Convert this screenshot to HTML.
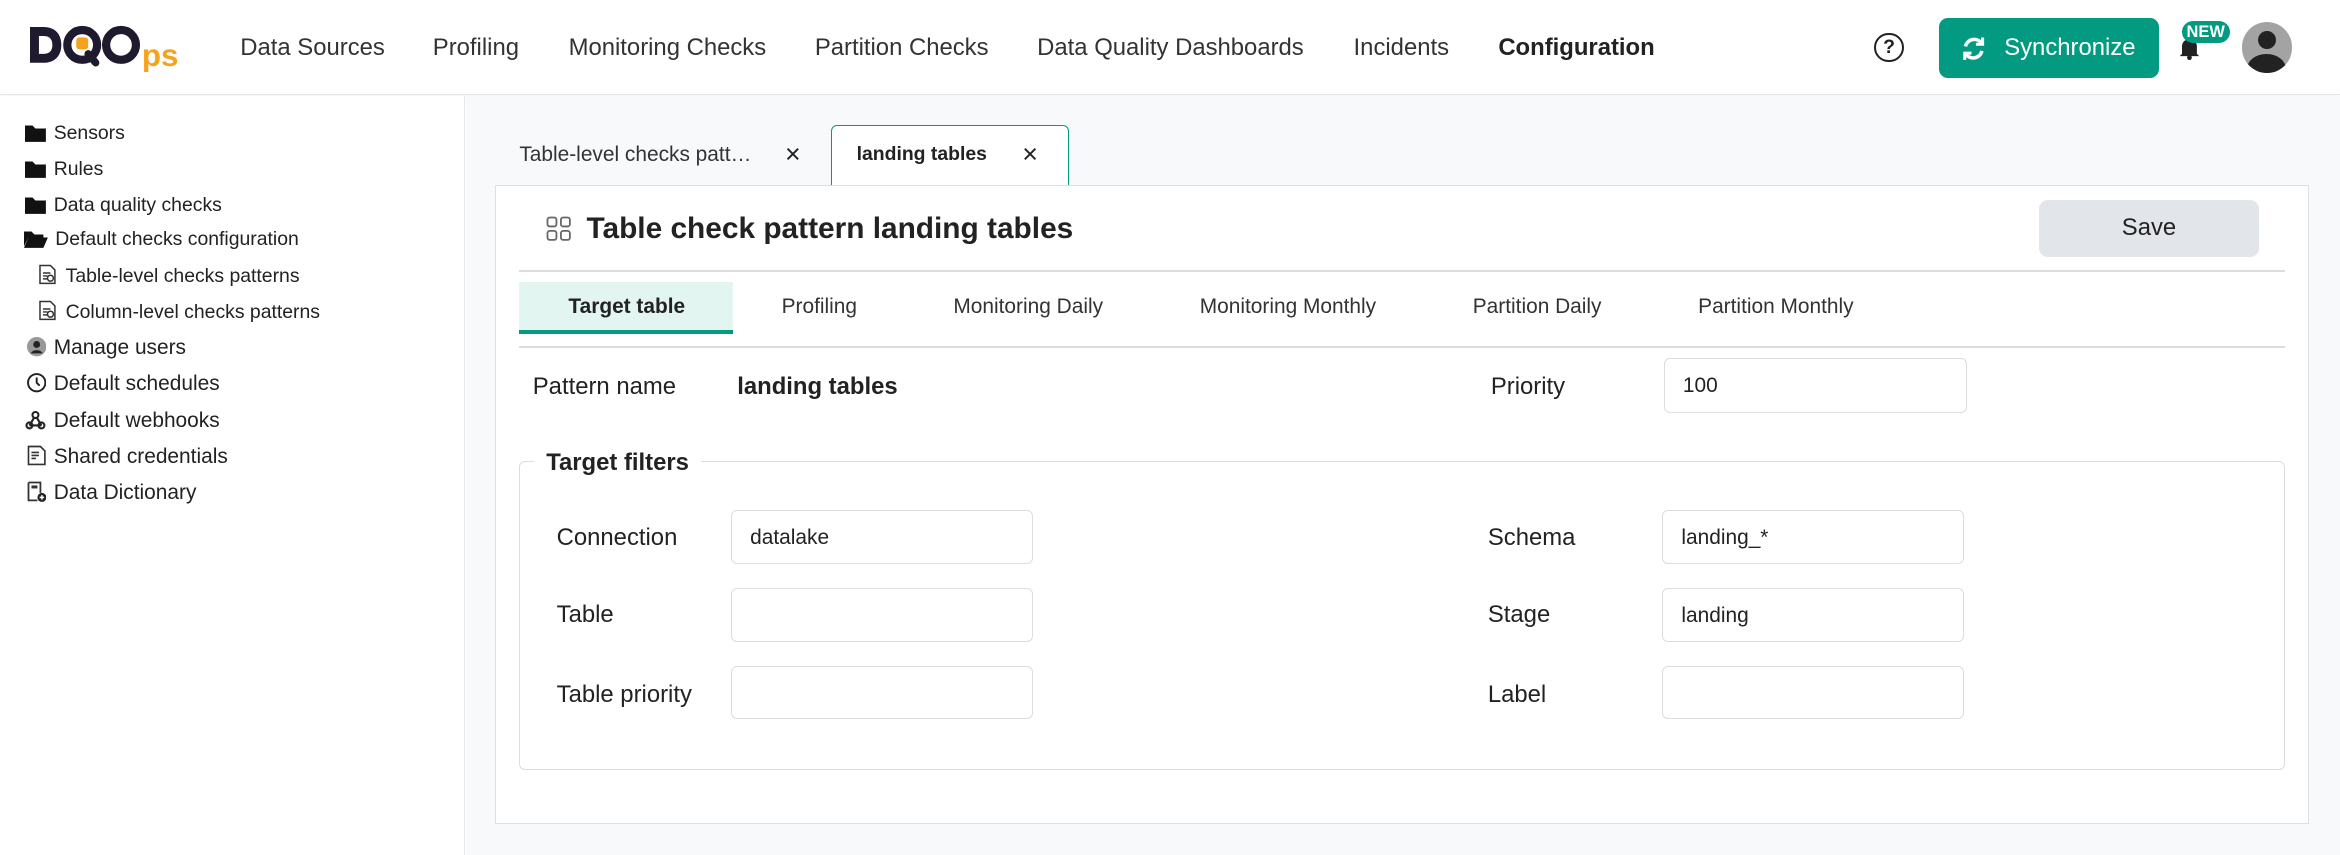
<!DOCTYPE html>
<html><head><meta charset="utf-8">
<style>
html,body{margin:0;padding:0;}
body{width:1568px;height:573px;zoom:1.49235;overflow:hidden;font-family:"Liberation Sans",Arial,sans-serif;color:#222;background:#fff;position:relative;}
.a{position:absolute;white-space:nowrap;}
.hdr{position:absolute;left:0;top:0;width:1568px;height:63px;background:#fff;border-bottom:1px solid #e3e5e8;box-shadow:0 1px 3px rgba(0,0,0,.06);}
.nav{font-size:16px;color:#333;top:23px;}
.side{position:absolute;left:0;top:64px;width:311px;height:509px;background:#fff;border-right:1px solid #e5e7ea;}
.main{position:absolute;left:312px;top:64px;width:1256px;height:509px;background:#f8f9fa;}
.si{font-size:14px;color:#222;}
.si svg{vertical-align:-2px;margin-right:5px;}
.inp{position:absolute;height:35px;width:202px;border:1px solid #ddd;border-radius:4px;background:#fff;box-sizing:border-box;font-size:14px;padding:10px 12px;color:#222;}
.lbl{font-size:16px;color:#222;}
.st{font-size:14px;color:#333;top:198px;transform:translateX(-50%);}
</style></head><body>
<div class="hdr"></div>
<!-- logo -->
<svg class="a" style="left:18px;top:16px;" width="120" height="32" viewBox="0 0 120 32">
<path d="M2 2h9c8 0 12 5 12 12s-4 12-12 12H2z M8 8v12h3c4 0 6-2 6-6s-2-6-6-6z" fill="#1f1a2e" fill-rule="evenodd"/>
<circle cx="37" cy="14" r="10" fill="none" stroke="#1f1a2e" stroke-width="5.5"/>
<line x1="41" y1="20" x2="46" y2="26" stroke="#1f1a2e" stroke-width="5" stroke-linecap="round"/>
<rect x="33" y="9" width="8" height="8" rx="2" fill="#f7a21b"/>
<circle cx="63" cy="14" r="10" fill="none" stroke="#1f1a2e" stroke-width="5.5"/>
<text x="77" y="28" font-family="Liberation Sans" font-weight="bold" font-size="21" fill="#f7a21b">ps</text>
</svg>
<div class="a nav" style="left:161px;">Data Sources</div>
<div class="a nav" style="left:290px;">Profiling</div>
<div class="a nav" style="left:381px;">Monitoring Checks</div>
<div class="a nav" style="left:546px;">Partition Checks</div>
<div class="a nav" style="left:695px;">Data Quality Dashboards</div>
<div class="a nav" style="left:907px;">Incidents</div>
<div class="a nav" style="left:1004px;font-weight:bold;color:#222;">Configuration</div>
<div class="a" style="left:1256px;top:22px;width:17px;height:17px;border:2px solid #222;border-radius:50%;font-size:13px;font-weight:bold;text-align:center;line-height:17px;">?</div>
<div class="a" style="left:1299px;top:12px;width:148px;height:40px;background:#029a80;border-radius:6px;color:#fff;font-size:16px;line-height:40px;">
<svg style="position:absolute;left:15px;top:12px;" width="17" height="17" viewBox="0 0 17 17" fill="none" stroke="#fff" stroke-width="2.4"><path d="M3 7a6 6 0 0 1 10.5-2.5"/><path d="M14 10a6 6 0 0 1-10.5 2.5"/><path d="M14.5 1v4.5h-4.5" stroke-width="2"/><path d="M2.5 16v-4.5h4.5" stroke-width="2"/></svg>
<span style="position:absolute;left:44px;">Synchronize</span></div>
<svg class="a" style="left:1460px;top:24px;" width="14" height="16" viewBox="0 0 14 16"><path d="M2 12V7a5 5 0 0 1 10 0v5l1.5 1.5h-13z" fill="#222"/><circle cx="7" cy="14.5" r="1.6" fill="#222"/></svg>
<div class="a" style="left:1462px;top:14px;width:32px;height:15px;background:#029a80;border-radius:8px;color:#fff;font-size:11px;font-weight:bold;text-align:center;line-height:15px;">NEW</div>
<div class="a" style="left:1502px;top:15px;width:34px;height:34px;border-radius:50%;background:#a3a3a3;overflow:hidden;"><div style="position:absolute;left:11px;top:6px;width:12px;height:12px;border-radius:50%;background:#222;"></div><div style="position:absolute;left:4px;top:21px;width:26px;height:20px;border-radius:50%;background:#222;"></div></div>

<div class="side"></div>
<div class="main"></div>
<!-- sidebar -->
<div class="a si" style="left:17px;top:82px;font-size:13px;"><svg width="14" height="12" viewBox="0 0 14 12"><path d="M0 1h5l2 2h7v9H0z" fill="#111"/></svg>Sensors</div>
<div class="a si" style="left:17px;top:106px;font-size:13px;"><svg width="14" height="12" viewBox="0 0 14 12"><path d="M0 1h5l2 2h7v9H0z" fill="#111"/></svg>Rules</div>
<div class="a si" style="left:17px;top:130px;font-size:13px;"><svg width="14" height="12" viewBox="0 0 14 12"><path d="M0 1h5l2 2h7v9H0z" fill="#111"/></svg>Data quality checks</div>
<div class="a si" style="left:16px;top:153px;font-size:13px;"><svg width="16" height="12" viewBox="0 0 16 12"><path d="M0 1h5l2 2h6v2H3L0 11z M3 5h13l-3 7H0z" fill="#111"/></svg>Default checks configuration</div>
<div class="a si" style="left:25px;top:177px;font-size:13px;"><svg width="14" height="14" viewBox="0 0 14 14" fill="none" stroke="#333" stroke-width="1"><path d="M2 1h7l3 3v9H2z"/><path d="M4 6h5M4 8h3M4 10h3"/><circle cx="9" cy="9.5" r="2"/></svg>Table-level checks patterns</div>
<div class="a si" style="left:25px;top:201px;font-size:13px;"><svg width="14" height="14" viewBox="0 0 14 14" fill="none" stroke="#333" stroke-width="1"><path d="M2 1h7l3 3v9H2z"/><path d="M4 6h5M4 8h3M4 10h3"/><circle cx="9" cy="9.5" r="2"/></svg>Column-level checks patterns</div>
<div class="a si" style="left:18px;top:225px;"><svg width="13" height="13" viewBox="0 0 13 13"><circle cx="6.5" cy="6.5" r="6.5" fill="#999"/><circle cx="6.5" cy="5" r="2.3" fill="#222"/><path d="M2.5 11a4.5 4 0 0 1 8 0z" fill="#222"/></svg>Manage users</div>
<div class="a si" style="left:18px;top:249px;"><svg width="13" height="13" viewBox="0 0 13 13" fill="none" stroke="#222" stroke-width="1.3"><circle cx="6.5" cy="6.5" r="5.8"/><path d="M6.5 3v3.5l2 2"/></svg>Default schedules</div>
<div class="a si" style="left:17px;top:274px;"><svg width="14" height="14" viewBox="0 0 14 14" fill="none" stroke="#222" stroke-width="1.4"><circle cx="7" cy="4" r="2"/><circle cx="3" cy="11" r="2"/><circle cx="11" cy="11" r="2"/><path d="M6 6l-3 5M8 6l3 5M3 11h8"/></svg>Default webhooks</div>
<div class="a si" style="left:18px;top:298px;"><svg width="13" height="14" viewBox="0 0 13 14" fill="none" stroke="#333" stroke-width="1.1"><path d="M1 1h8l3 3v9H1z"/><path d="M3 5h5M3 7h5M3 9h3"/></svg>Shared credentials</div>
<div class="a si" style="left:18px;top:322px;"><svg width="13" height="14" viewBox="0 0 13 14"><path d="M1 1h8v7H9" fill="none" stroke="#333" stroke-width="1.2"/><path d="M1 1v12h6" fill="none" stroke="#333" stroke-width="1.2"/><rect x="3" y="3" width="4" height="2" fill="#333"/><circle cx="10" cy="11" r="3" fill="#222"/><path d="M10 9.5v3M8.5 11h3" stroke="#fff" stroke-width="1"/></svg>Data Dictionary</div>

<!-- tabs -->
<div class="a" style="left:348px;top:96px;font-size:14px;color:#333;">Table-level checks patt…</div>
<div class="a" style="left:526px;top:93px;font-size:18px;color:#222;">×</div>
<div class="a" style="left:557px;top:84px;width:159px;height:41px;background:#fff;border:1px solid #029a80;border-bottom:2px solid #029a80;border-radius:4px 4px 0 0;box-sizing:border-box;"></div>
<div class="a" style="left:574px;top:96px;font-size:13px;font-weight:bold;color:#222;">landing tables</div>
<div class="a" style="left:685px;top:93px;font-size:18px;color:#222;">×</div>

<!-- panel -->
<div class="a" style="left:332px;top:124px;width:1215px;height:428px;background:#fff;border:1px solid #e0e0e0;box-sizing:border-box;"></div>
<div class="a" style="left:366px;top:145px;width:17px;height:17px;">
<svg width="17" height="17" viewBox="0 0 17 17" fill="none" stroke="#666" stroke-width="1.2"><rect x="1" y="1" width="6" height="6" rx="1.5"/><rect x="10" y="1" width="6" height="6" rx="1.5"/><rect x="1" y="10" width="6" height="6" rx="1.5"/><rect x="10" y="10" width="6" height="6" rx="1.5"/></svg></div>
<div class="a" style="left:393px;top:142px;font-size:20px;font-weight:bold;color:#222;">Table check pattern landing tables</div>
<div class="a" style="left:1366px;top:134px;width:148px;height:38px;background:#e2e5e9;border-radius:6px;font-size:16px;text-align:center;line-height:38px;color:#222;">Save</div>
<div class="a" style="left:348px;top:181px;width:1183px;height:1px;background:#ddd;"></div>
<div class="a" style="left:348px;top:189px;width:143px;height:32px;background:#e3f5f1;border-bottom:3px solid #029a80;"></div>
<div class="a st" style="left:420px;font-weight:bold;color:#222;">Target table</div>
<div class="a st" style="left:549px;">Profiling</div>
<div class="a st" style="left:689px;">Monitoring Daily</div>
<div class="a st" style="left:863px;">Monitoring Monthly</div>
<div class="a st" style="left:1030px;">Partition Daily</div>
<div class="a st" style="left:1190px;">Partition Monthly</div>
<div class="a" style="left:348px;top:232px;width:1183px;height:1px;background:#ddd;"></div>

<div class="a lbl" style="left:357px;top:250px;">Pattern name</div>
<div class="a lbl" style="left:494px;top:250px;font-weight:bold;">landing tables</div>
<div class="a lbl" style="left:999px;top:250px;">Priority</div>
<div class="inp" style="left:1115px;top:240px;width:203px;height:37px;">100</div>

<div class="a" style="left:348px;top:309px;width:1183px;height:207px;border:1px solid #ddd;border-radius:4px;box-sizing:border-box;"></div>
<div class="a" style="left:358px;top:301px;background:#fff;padding:0 8px;font-size:16px;font-weight:bold;color:#222;">Target filters</div>

<div class="a lbl" style="left:373px;top:351px;">Connection</div>
<div class="inp" style="left:490px;top:342px;height:36px;">datalake</div>
<div class="a lbl" style="left:997px;top:351px;">Schema</div>
<div class="inp" style="left:1114px;top:342px;height:36px;">landing_*</div>
<div class="a lbl" style="left:373px;top:403px;">Table</div>
<div class="inp" style="left:490px;top:394px;height:36px;"></div>
<div class="a lbl" style="left:997px;top:403px;">Stage</div>
<div class="inp" style="left:1114px;top:394px;height:36px;">landing</div>
<div class="a lbl" style="left:373px;top:456px;">Table priority</div>
<div class="inp" style="left:490px;top:446px;height:36px;"></div>
<div class="a lbl" style="left:997px;top:456px;">Label</div>
<div class="inp" style="left:1114px;top:446px;height:36px;"></div>
</body></html>
